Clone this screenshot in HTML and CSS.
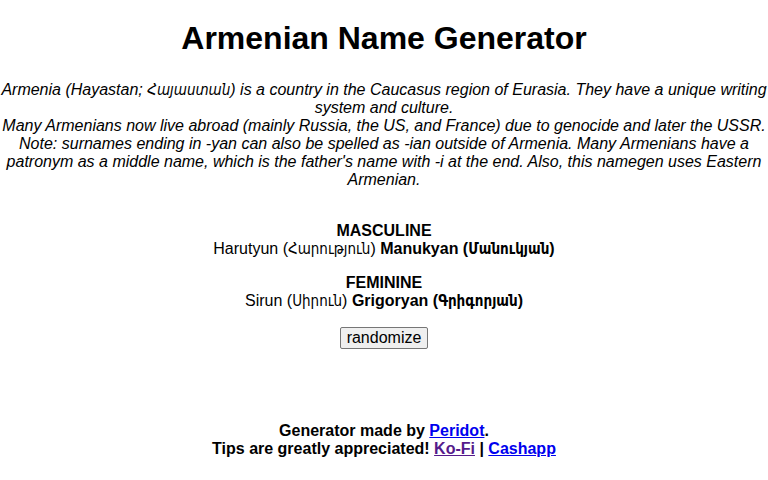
FILE: index.html
```html
<!DOCTYPE html>
<html lang="en">
<head>
<meta charset="utf-8">
<title>Armenian Name Generator</title>
<link rel="stylesheet" href="styles.css">
</head>
<body>
<main class="page">
  <h1 class="title">Armenian Name Generator</h1>
  <div class="intro">
    <p>Armenia (Hayastan; <span class="hy" lang="hy">Հայաստան</span>) is a country in the Caucasus region of Eurasia. They have a unique writing system and culture.</p>
    <p>Many Armenians now live abroad (mainly Russia, the US, and France) due to genocide and later the USSR.</p>
    <p>Note: surnames ending in -yan can also be spelled as -ian outside of Armenia. Many Armenians have a patronym as a middle name, which is the father's name with -i at the end. Also, this namegen uses Eastern Armenian.</p>
  </div>

  <section class="names">
    <div class="group">
      <div class="label">MASCULINE</div>
      <div>Harutyun (<span class="hy" lang="hy">Հարություն</span>) <b>Manukyan (<span class="hy" lang="hy">Մանուկյան</span>)</b></div>
    </div>
    <div class="group">
      <div class="label">FEMININE</div>
      <div>Sirun (<span class="hy" lang="hy">Սիրուն</span>) <b>Grigoryan (<span class="hy" lang="hy">Գրիգորյան</span>)</b></div>
    </div>
    <button class="btn" type="button">randomize</button>
  </section>

  <footer class="credits">
    <div>Generator made by <a href="#peridot">Peridot</a>.</div>
    <div>Tips are greatly appreciated! <a class="visited" href="#kofi">Ko-Fi</a> | <a href="#cashapp">Cashapp</a></div>
  </footer>
</main>
</body>
</html>
```

FILE: styles.css
```css
html, body {
  margin: 0;
  padding: 0;
  background: #fff;
}

body {
  font-family: "Liberation Sans", Arial, sans-serif;
  font-size: 16px;
  line-height: 18px;
  color: #000;
}

.page {
  text-align: center;
}

/* Armenian script has no glyphs in Liberation Sans; use a narrow face */
.hy {
  font-family: "DejaVu Sans Condensed", "DejaVu Sans", sans-serif;
  font-size: 15px;
}

.title {
  font-size: 32px;
  line-height: 37px;
  font-weight: bold;
  margin: 20px 0 24px;
}

.intro {
  font-style: italic;
}

.intro p {
  margin: 0;
}

.names {
  margin-top: 33px;
  display: flex;
  flex-direction: column;
  align-items: center;
  gap: 16px;
}

.label {
  font-weight: bold;
}

.btn {
  font-family: "Liberation Sans", Arial, sans-serif;
  font-size: 16px;
  line-height: 18px;
  color: #000;
  background: #efefef;
  border: 1px solid #767676;
  border-radius: 2px;
  padding: 1px 6px;
  margin-top: 1px;
}

.credits {
  margin-top: 73px;
  font-weight: bold;
}

.credits a {
  color: #0000ee;
  text-decoration: underline;
}

.credits a.visited {
  color: #551a8b;
}
```
